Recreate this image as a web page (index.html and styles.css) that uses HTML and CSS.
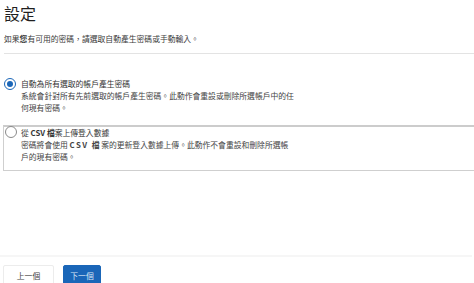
FILE: index.html
```html
<!DOCTYPE html>
<html lang="zh-Hant">
<head>
<meta charset="utf-8">
<link rel="stylesheet" href="styles.css">
</head>
<body>
<div class="page">
  <h1 class="title">設定</h1>
  <p class="intro">如果<b class="fb">您</b>有可用的密碼，請選取自動產生密碼或手動輸入。</p>
  <div class="divider"></div>
  <div class="options">
    <div class="option selected">
      <span class="radio on"><span class="dot"></span></span>
      <div class="option-text">
        <div class="option-title">自動為所有選取的帳戶產生密碼</div>
        <div class="option-desc">系統會針對所有先前選取的帳戶產生密碼。此動作會重設或刪除所選帳戶中的任何現有密碼。</div>
      </div>
    </div>
    <div class="option bordered">
      <span class="radio"></span>
      <div class="option-text">
        <div class="option-title">從 <b class="fb">CSV 檔</b>案上傳登入數據</div>
        <div class="option-desc">密碼將會使用 <b class="fb wide">CSV 檔</b>案的更新登入數據上傳。此動作不會重設和刪除所選帳戶的現有密碼。</div>
      </div>
    </div>
  </div>
  <div class="spacer"></div>
  <div class="footer">
    <button class="btn btn-secondary">上一個</button>
    <button class="btn btn-primary">下一個</button>
  </div>
</div>
</body>
</html>
```
FILE: styles.css
```css
html, body {
  margin: 0;
  padding: 0;
  background: #ffffff;
}
body {
  font-family: "Noto Sans CJK TC", "Noto Sans", sans-serif;
  color: #333333;
  width: 474px;
  height: 283px;
  overflow: hidden;
}
.page {
  display: flex;
  flex-direction: column;
  height: 283px;
}
.title {
  margin: 2px 0 0 4px;
  font-size: 16px;
  line-height: 22px;
  font-weight: 400;
  color: #1f1f1f;
}
.intro {
  margin: 9px 0 0 4px;
  font-size: 7.8px;
  line-height: 12px;
  color: #3a3a3a;
}
.fb {
  font-weight: 700;
}
.fb.wide {
  letter-spacing: 1.5px;
}
.divider {
  margin: 8px 0 0 4px;
  height: 1px;
  background: #e3e3e3;
}
.options {
  display: flex;
  flex-direction: column;
  margin-top: 24px;
}
.option {
  display: flex;
  align-items: flex-start;
  gap: 5px;
  padding: 0 0 0 4px;
}
.option.selected {
  height: 47px;
}
.option.bordered {
  gap: 4px;
  margin-left: 3px;
  margin-right: -4px;
  border: 1px solid #cfcfcf;
  border-top: 2px solid #cccccc;
  border-right: none;
  padding: 0 0 7px 1px;
  height: 36px;
}
.radio {
  flex: none;
  box-sizing: border-box;
  width: 12px;
  height: 12px;
  border-radius: 50%;
  border: 1px solid #8a8a8a;
  background: #fff;
  display: flex;
  align-items: center;
  justify-content: center;
  margin-top: 0;
}
.option.bordered .radio {
  margin-top: -1px;
}
.radio.on {
  border-color: #1a66b8;
}
.radio .dot {
  width: 6px;
  height: 6px;
  border-radius: 50%;
  background: #1a66b8;
}
.option-text {
  width: 275px;
}
.option-title {
  font-size: 7.8px;
  line-height: 12px;
  color: #333333;
}
.option-desc {
  font-size: 7.8px;
  line-height: 12px;
  color: #444444;
}
.spacer {
  flex: 1;
}
.footer {
  border-top: 2px solid #f6f6f6;
  margin-right: 2px;
  display: flex;
  gap: 9px;
  padding: 8px 0 0 3px;
  height: 18px;
}
.btn {
  font-family: "Noto Sans CJK TC", "Noto Sans", sans-serif;
  font-size: 7.8px;
  height: 20px;
  padding: 0;
  border-radius: 2px;
  cursor: pointer;
}
.btn-secondary {
  width: 51px;
  background: #fff;
  border: 1px solid #ececec;
  color: #444;
}
.btn-primary {
  width: 38px;
  background: #1a66b8;
  border: 1px solid #1a66b8;
  color: #d8e6f5;
}
```
